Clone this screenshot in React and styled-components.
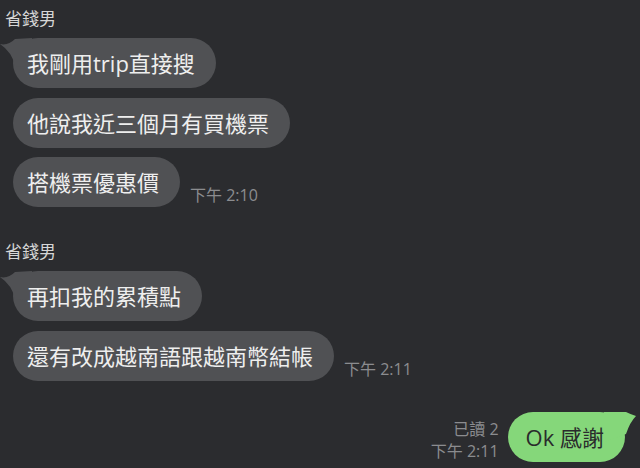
import React from "react";
import styled, { createGlobalStyle } from "styled-components";

const GlobalStyle = createGlobalStyle`
  html, body {
    margin: 0;
    padding: 0;
    background: #2b2c2f;
  }
  body {
    font-family: "Open Sans", "Noto Sans CJK TC", sans-serif;
    width: 640px;
    height: 468px;
    overflow: hidden;
  }
`;

const Chat = styled.div`
  display: flex;
  flex-direction: column;
  padding: 8px 0 0 0;
  width: 640px;
  height: 468px;
  box-sizing: border-box;
`;

const Group = styled.div`
  display: flex;
  flex-direction: column;
  margin-bottom: ${(p) => p.$after || 0}px;
`;

const Sender = styled.div`
  margin-left: 5px;
  font-size: 17px;
  line-height: 22px;
  color: #d6d6d6;
`;

const Stack = styled.div`
  display: flex;
  flex-direction: column;
  gap: 9.5px;
  margin: 8px 0 0 13px;
`;

const Row = styled.div`
  display: flex;
  align-items: flex-end;
  justify-content: ${(p) => (p.$mine ? "flex-end" : "flex-start")};
  padding-right: ${(p) => (p.$mine ? "15px" : "0")};
`;

const Bubble = styled.div`
  position: relative;
  height: 50px;
  line-height: 50px;
  font-size: 22px;
  border-radius: 25px;
  white-space: nowrap;
  padding: ${(p) => (p.$mine ? "0 21px 0 18px" : "0 21px 0 14px")};
  background: ${(p) => (p.$mine ? "#85d77a" : "#505154")};
  color: ${(p) => (p.$mine ? "#2a2b2c" : "#eeeeee")};
`;

const BubbleText = styled.span`
  position: relative;
  z-index: 1;
`;

const TailSvg = styled.svg`
  position: absolute;
  top: 0;
  ${(p) => (p.$mine ? "right: -11px;" : "left: -13px;")}
  width: 32px;
  height: 30px;
`;

const Time = styled.div`
  margin-left: 10px;
  font-size: 16px;
  line-height: 20px;
  margin-bottom: 2px;
  color: #8b8c8f;
`;

const Meta = styled.div`
  display: flex;
  flex-direction: column;
  align-items: flex-end;
  margin-right: 9px;
  font-size: 16px;
  line-height: 22px;
  color: #8b8c8f;
`;

function Tail({ mine }) {
  if (mine) {
    return (
      <TailSvg $mine viewBox="0 0 32 30">
        <path d="M0 0 L22 0 Q26 2 32 4 Q26 10 22 22 L0 30 Z" fill="#85d77a" />
      </TailSvg>
    );
  }
  return (
    <TailSvg viewBox="0 0 32 30">
      <path d="M0 6 Q8 8 15 1 L32 0 L32 30 L15 28 Q12 14 0 6 Z" fill="#505154" />
    </TailSvg>
  );
}

function Message({ text, time, first }) {
  return (
    <Row>
      <Bubble>
        {first && <Tail />}
        <BubbleText>{text}</BubbleText>
      </Bubble>
      {time && <Time>{time}</Time>}
    </Row>
  );
}

const groups = [
  {
    name: "省錢男",
    after: 34,
    messages: [
      { text: "我剛用trip直接搜" },
      { text: "他說我近三個月有買機票" },
      { text: "搭機票優惠價", time: "下午 2:10" },
    ],
  },
  {
    name: "省錢男",
    after: 31.5,
    messages: [
      { text: "再扣我的累積點" },
      { text: "還有改成越南語跟越南幣結帳", time: "下午 2:11" },
    ],
  },
];

export default function App() {
  return (
    <>
      <GlobalStyle />
      <Chat>
        {groups.map((g, gi) => (
          <Group key={gi} $after={g.after}>
            <Sender>{g.name}</Sender>
            <Stack>
              {g.messages.map((m, i) => (
                <Message key={i} text={m.text} time={m.time} first={i === 0} />
              ))}
            </Stack>
          </Group>
        ))}
        <Row $mine>
          <Meta>
            <span>已讀 2</span>
            <span>下午 2:11</span>
          </Meta>
          <Bubble $mine>
            <Tail mine />
            <BubbleText>Ok 感謝</BubbleText>
          </Bubble>
        </Row>
      </Chat>
    </>
  );
}
